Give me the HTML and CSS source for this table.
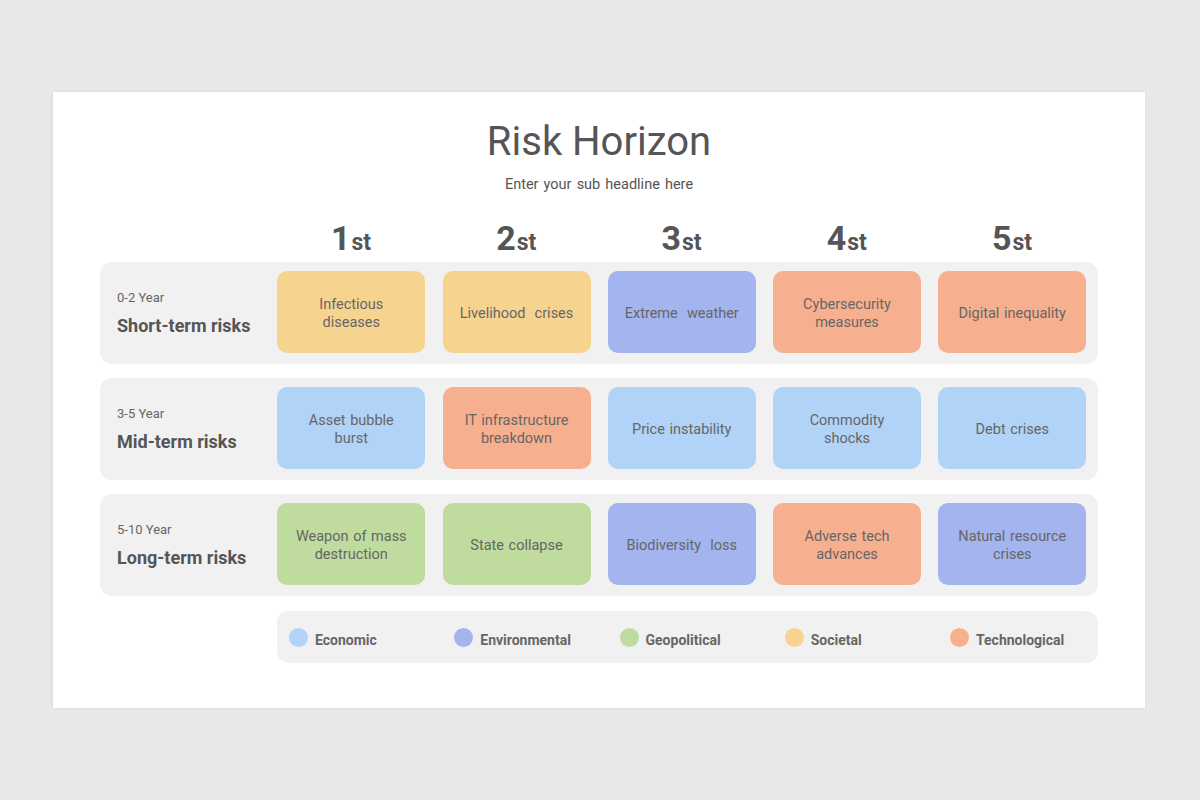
FILE: index.html
```html
<!DOCTYPE html>
<html lang="en">
<head>
<meta charset="utf-8">
<title>Risk Horizon</title>
<link rel="stylesheet" href="styles.css">
</head>
<body>
<main class="slide">
  <h1 class="title">Risk Horizon</h1>
  <p class="subtitle">Enter your sub headline here</p>

  <div class="ranks">
    <div class="rank"><span class="num">1</span><span class="suf">st</span></div>
    <div class="rank"><span class="num">2</span><span class="suf">st</span></div>
    <div class="rank"><span class="num">3</span><span class="suf">st</span></div>
    <div class="rank"><span class="num">4</span><span class="suf">st</span></div>
    <div class="rank"><span class="num">5</span><span class="suf">st</span></div>
  </div>

  <div class="rows">
    <section class="row">
      <div class="label"><span class="years">0-2 Year</span><span class="term">Short-term risks</span></div>
      <div class="cell societal">Infectious<br>diseases</div>
      <div class="cell societal">Livelihood&nbsp; crises</div>
      <div class="cell environmental">Extreme&nbsp; weather</div>
      <div class="cell technological">Cybersecurity<br>measures</div>
      <div class="cell technological">Digital inequality</div>
    </section>
    <section class="row">
      <div class="label"><span class="years">3-5 Year</span><span class="term">Mid-term risks</span></div>
      <div class="cell economic">Asset bubble<br>burst</div>
      <div class="cell technological">IT infrastructure<br>breakdown</div>
      <div class="cell economic">Price instability</div>
      <div class="cell economic">Commodity<br>shocks</div>
      <div class="cell economic">Debt crises</div>
    </section>
    <section class="row">
      <div class="label"><span class="years">5-10 Year</span><span class="term">Long-term risks</span></div>
      <div class="cell geopolitical">Weapon of mass<br>destruction</div>
      <div class="cell geopolitical">State collapse</div>
      <div class="cell environmental">Biodiversity&nbsp; loss</div>
      <div class="cell technological">Adverse tech<br>advances</div>
      <div class="cell environmental">Natural resource<br>crises</div>
    </section>
  </div>

  <div class="legend">
    <div class="item"><span class="dot economic"></span>Economic</div>
    <div class="item"><span class="dot environmental"></span>Environmental</div>
    <div class="item"><span class="dot geopolitical"></span>Geopolitical</div>
    <div class="item"><span class="dot societal"></span>Societal</div>
    <div class="item"><span class="dot technological"></span>Technological</div>
  </div>
</main>
</body>
</html>
```

FILE: styles.css
```css
* { box-sizing: border-box; }

html, body {
  margin: 0;
  padding: 0;
}

body {
  background: #e9e8e9;
  font-family: Roboto, "Liberation Sans", Arial, sans-serif;
  color: #555;
  padding: 92px 0 0 53px;
  height: 800px;
  overflow: hidden;
}

.slide {
  width: 1092px;
  height: 616px;
  background: #fff;
  box-shadow: -1px 0 3px rgba(0,0,0,0.06);
  padding: 26px 47px 0 47px;
}

.title {
  margin: 0;
  font-size: 40px;
  line-height: 48px;
  font-weight: 400;
  color: #555;
  text-align: center;
}

.subtitle {
  margin: 9px 0 0;
  font-size: 14.5px;
  line-height: 20px;
  color: #555;
  text-align: center;
  word-spacing: 1.5px;
}

.ranks {
  display: grid;
  grid-template-columns: repeat(5, 148px);
  column-gap: 17.25px;
  margin: 23px 0 0 177px;
  height: 44px;
}

.rank {
  text-align: center;
  color: #555;
  font-weight: 700;
  line-height: 40px;
}

.rank .num { font-size: 34px; }
.rank .suf { font-size: 23px; margin-left: 1px; }

.rows {
  display: flex;
  flex-direction: column;
  gap: 14px;
}

.row {
  display: grid;
  grid-template-columns: 160px repeat(5, 148px);
  column-gap: 17.25px;
  background: #f1f1f1;
  border-radius: 12px;
  padding: 9px 12px 11px 0;
  width: 998px;
}

.row .label {
  padding-left: 17px;
  display: flex;
  flex-direction: column;
  justify-content: center;
}

.years {
  font-size: 13px;
  line-height: 18px;
  color: #666;
  margin-top: 3px;
}

.term {
  font-size: 18px;
  line-height: 24px;
  font-weight: 700;
  color: #555;
  margin-top: 7px;
}

.cell {
  height: 82px;
  border-radius: 10px;
  display: flex;
  align-items: center;
  justify-content: center;
  text-align: center;
  font-size: 14.5px;
  line-height: 18px;
  color: #666;
  padding-top: 4px;
  word-spacing: 1px;
}

.economic { background: #b1d3f7; }
.environmental { background: #a3b4ee; }
.geopolitical { background: #bfdb9e; }
.societal { background: #f6d490; }
.technological { background: #f6b08f; }

.legend {
  display: grid;
  grid-template-columns: repeat(5, 165.25px);
  margin: 15px 0 0 177px;
  width: 821px;
  height: 52px;
  background: #f1f1f1;
  border-radius: 12px;
  padding-left: 12px;
  align-items: center;
}

.item {
  display: flex;
  align-items: center;
  font-size: 14px;
  font-weight: 700;
  color: #666;
  padding-top: 5px;
}

.dot {
  width: 19px;
  height: 19px;
  border-radius: 50%;
  margin-right: 7px;
  margin-top: -4px;
}
```
